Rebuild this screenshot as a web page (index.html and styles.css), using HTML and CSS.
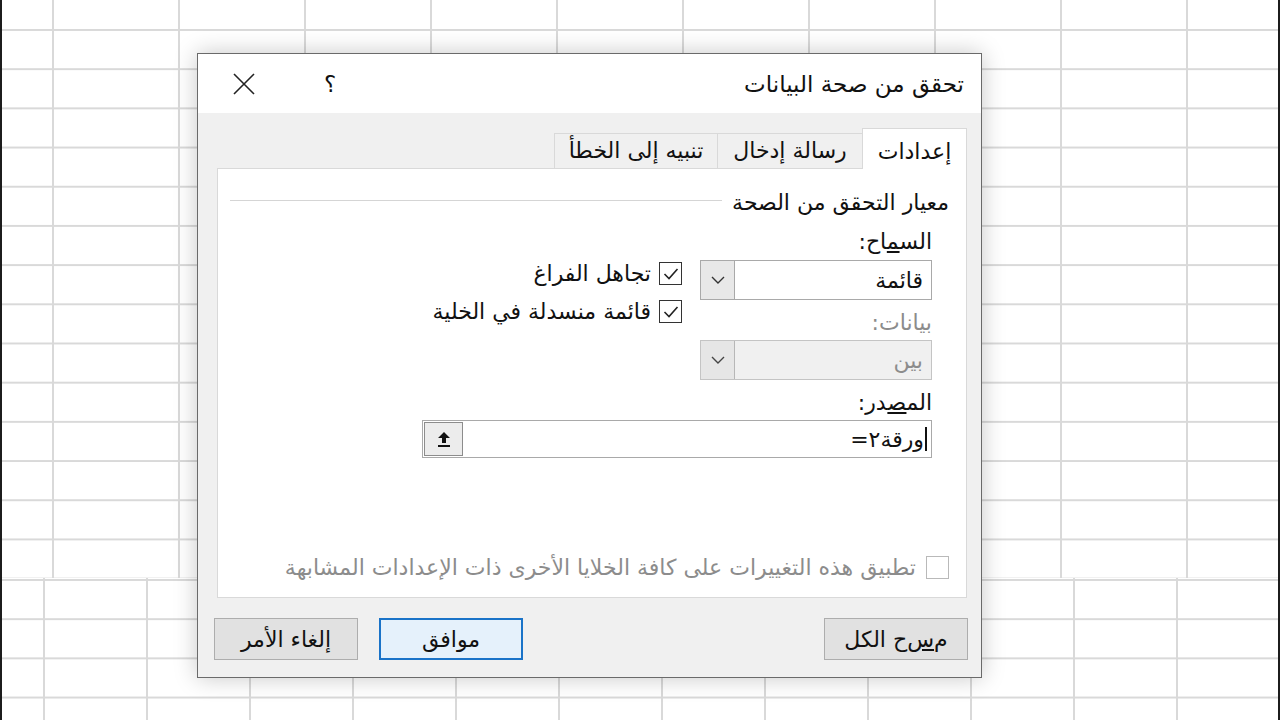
FILE: index.html
```html
<!DOCTYPE html>
<html lang="ar">
<head>
<meta charset="utf-8">
<link rel="stylesheet" href="styles.css">
</head>
<body>
<div class="sheet">
  <div class="grid-top"></div>
  <div class="grid-bottom"></div>

  <div class="dialog" dir="rtl">
    <div class="titlebar">
      <span class="title">تحقق من صحة البيانات</span>
      <span class="help">؟</span>
      <span class="close">
        <svg width="24" height="24" viewBox="0 0 24 24"><path d="M2 2 L22 22 M22 2 L2 22" stroke="#222" stroke-width="1.6" fill="none"/></svg>
      </span>
    </div>

    <div class="body">
      <div class="tabs">
        <div class="tab active">إعدادات</div>
        <div class="tab t2">رسالة إدخال</div>
        <div class="tab t3">تنبيه إلى الخطأ</div>
      </div>

      <div class="panel">
        <div class="legend">
          <span class="legend-text">معيار التحقق من الصحة</span>
          <span class="rule"></span>
        </div>

        <div class="form">
          <div class="top-row">
            <div class="fields">
              <div class="label">الس<u>م</u>اح:</div>
              <div class="combo">
                <span class="value">قائمة</span>
                <span class="drop"><svg width="14" height="8" viewBox="0 0 14 8"><path d="M1 1 L7 7 L13 1" stroke="#333" stroke-width="1.4" fill="none"/></svg></span>
              </div>
              <div class="label disabled gap">بيانات:</div>
              <div class="combo off">
                <span class="value">بين</span>
                <span class="drop"><svg width="14" height="8" viewBox="0 0 14 8"><path d="M1 1 L7 7 L13 1" stroke="#444" stroke-width="1.4" fill="none"/></svg></span>
              </div>
            </div>
            <div class="checks">
              <div class="check">
                <span class="box"><svg width="18" height="18" viewBox="0 0 18 18"><path d="M2.5 9 L7 13.5 L15.5 4" stroke="#222" stroke-width="1.6" fill="none"/></svg></span>
                <span>تجاهل الفراغ</span>
              </div>
              <div class="check">
                <span class="box"><svg width="18" height="18" viewBox="0 0 18 18"><path d="M2.5 9 L7 13.5 L15.5 4" stroke="#222" stroke-width="1.6" fill="none"/></svg></span>
                <span>قائمة منسدلة في الخلية</span>
              </div>
            </div>
          </div>

          <div class="label gap">الم<u>ص</u>در:</div>
          <div class="source">
            <span class="src-text"><span class="caret"></span>ورقة٢=</span>
            <span class="src-btn"><svg width="14" height="18" viewBox="0 0 14 18"><path d="M7 2 L13 8 H9 V13 H5 V8 H1 Z" fill="#111"/><rect x="1" y="15" width="12" height="2" fill="#111"/></svg></span>
          </div>
        </div>

        <div class="apply">
          <span class="box light"></span>
          <span>تطبيق هذه التغييرات على كافة الخلايا الأخرى ذات الإعدادات المشابهة</span>
        </div>
      </div>

      <div class="buttons">
        <div class="btn">م<u>س</u>ح الكل</div>
        <div class="btn-group">
          <div class="btn default">موافق</div>
          <div class="btn">إلغاء الأمر</div>
        </div>
      </div>
    </div>
  </div>
</div>
</body>
</html>
```

FILE: styles.css
```css
html, body {
  margin: 0;
  padding: 0;
}

body {
  font-family: "DejaVu Sans", "Noto Sans Arabic", sans-serif;
  color: #111;
}

.sheet {
  position: relative;
  width: 1280px;
  height: 720px;
  box-sizing: border-box;
  border-left: 2px solid #1c1c1c;
  border-right: 2px solid #1c1c1c;
  background: #fff;
  display: flex;
  flex-direction: column;
  overflow: hidden;
}

.grid-top {
  height: 578px;
  background-image:
    linear-gradient(to right, #d9d9d9 2px, transparent 2px),
    linear-gradient(to bottom, #d9d9d9 2px, transparent 2px);
  background-size: 126px 39.2px;
  background-position: 50px 29px;
}

.grid-bottom {
  flex: 1;
  background-image:
    linear-gradient(to right, #d9d9d9 2px, transparent 2px),
    linear-gradient(to bottom, #d9d9d9 2px, transparent 2px);
  background-size: 103px 39.2px;
  background-position: 41px 1px;
}

/* ---------- dialog window ---------- */
.dialog {
  position: absolute;
  left: 195px;
  top: 53px;
  width: 785px;
  height: 625px;
  box-sizing: border-box;
  border: 1px solid #6a6a6a;
  background: #f0f0f0;
  box-shadow: 0 0 22px rgba(0, 0, 0, 0.22);
  display: flex;
  flex-direction: column;
}

.titlebar {
  height: 59px;
  background: #fff;
  display: flex;
  align-items: center;
  padding: 0 17px 0 34px;
}

.title {
  font-size: 23px;
  flex: 1;
}

.help {
  font-size: 23px;
  margin-left: 68px;
}

.close {
  display: flex;
  width: 24px;
  height: 24px;
}

.body {
  flex: 1;
  padding: 15px 14px 0 19px;
  display: flex;
  flex-direction: column;
}

/* ---------- tabs ---------- */
.tabs {
  display: flex;
  align-items: flex-end;
  height: 40px;
  position: relative;
  z-index: 1;
}

.tab {
  box-sizing: border-box;
  height: 35px;
  border: 1px solid #d9d9d9;
  border-bottom: none;
  background: #f0f0f0;
  font-size: 22px;
  display: flex;
  align-items: center;
  justify-content: center;
  padding-bottom: 2px;
}

.tab.active {
  height: 41px;
  width: 105px;
  background: #fff;
  margin-bottom: -1px;
  padding-bottom: 0;
  padding-top: 4px;
}

.tab.t2 {
  width: 145px;
  border-right: none;
}

.tab.t3 {
  width: 163px;
  border-right: none;
}

/* ---------- panel ---------- */
.panel {
  height: 430px;
  box-sizing: border-box;
  background: #fff;
  border: 1px solid #d9d9d9;
  padding: 23px 17px 18px 12px;
  display: flex;
  flex-direction: column;
}

.legend {
  display: flex;
  align-items: center;
  gap: 10px;
  height: 22px;
}

.legend-text {
  font-size: 22px;
  line-height: 22px;
  white-space: nowrap;
}

.rule {
  flex: 1;
  height: 0;
  border-top: 1px solid #d5d5d5;
  border-bottom: 1px solid #fff;
  margin-top: -4px;
}

.form {
  width: 510px;
  margin: 17px 17px 0 0;
  display: flex;
  flex-direction: column;
}

.top-row {
  display: flex;
  gap: 18px;
}

.fields {
  width: 232px;
  display: flex;
  flex-direction: column;
}

.label {
  font-size: 22px;
  line-height: 22px;
  height: 22px;
}

.label.gap {
  margin-top: 12px;
}

.label.disabled {
  color: #8c8c8c;
}

.label + .combo {
  margin-top: 7px;
}

.label.disabled + .combo {
  margin-top: 6px;
}

.combo {
  height: 40px;
  box-sizing: border-box;
  border: 1px solid #a9a9a9;
  background: #fff;
  display: flex;
  align-items: stretch;
}

.combo .value {
  flex: 1;
  font-size: 22px;
  display: flex;
  align-items: center;
  padding-right: 8px;
}

.combo .drop {
  width: 33px;
  background: #e8e8e8;
  border-right: 1px solid #a9a9a9;
  display: flex;
  align-items: center;
  justify-content: center;
}

.combo.off {
  background: #f0f0f0;
  border-color: #c4c4c4;
}

.combo.off .value {
  color: #8c8c8c;
}

.combo.off .drop {
  background: #e6e6e6;
  border-color: #b7b7b7;
}

.checks {
  flex: 1;
  padding-top: 31px;
  display: flex;
  flex-direction: column;
  gap: 15px;
}

.check {
  display: flex;
  align-items: center;
  gap: 8px;
  height: 23px;
  font-size: 22px;
}

.box {
  width: 23px;
  height: 23px;
  box-sizing: border-box;
  border: 1.5px solid #333;
  background: #fff;
  display: flex;
  align-items: center;
  justify-content: center;
  flex-shrink: 0;
}

.box.light {
  border: 1px solid #b9b9b9;
}

.source {
  margin-top: 6px;
  height: 38px;
  box-sizing: border-box;
  border: 1px solid #a9a9a9;
  background: #fff;
  display: flex;
  align-items: stretch;
}

.src-text {
  flex: 1;
  font-size: 22px;
  display: flex;
  align-items: center;
  padding-right: 4px;
}

.caret {
  width: 2px;
  height: 24px;
  background: #111;
  margin-left: 1px;
}

.src-btn {
  width: 39px;
  background: #ececec;
  border: 1px solid #8c8c8c;
  margin: 1px;
  box-sizing: border-box;
  display: flex;
  align-items: center;
  justify-content: center;
}

.apply {
  margin-top: auto;
  display: flex;
  align-items: center;
  gap: 10px;
  font-size: 22px;
  color: #8c8c8c;
  height: 23px;
}

/* ---------- buttons ---------- */
.buttons {
  display: flex;
  justify-content: space-between;
  margin: 20px -1px 0 -3px;
}

.btn-group {
  display: flex;
  gap: 21px;
}

.btn {
  width: 144px;
  height: 42px;
  box-sizing: border-box;
  border: 1px solid #adadad;
  background: #e1e1e1;
  font-size: 22px;
  display: flex;
  align-items: center;
  justify-content: center;
}

.btn.default {
  border: 2px solid #1a73c8;
  background: #e5f1fb;
}
```
